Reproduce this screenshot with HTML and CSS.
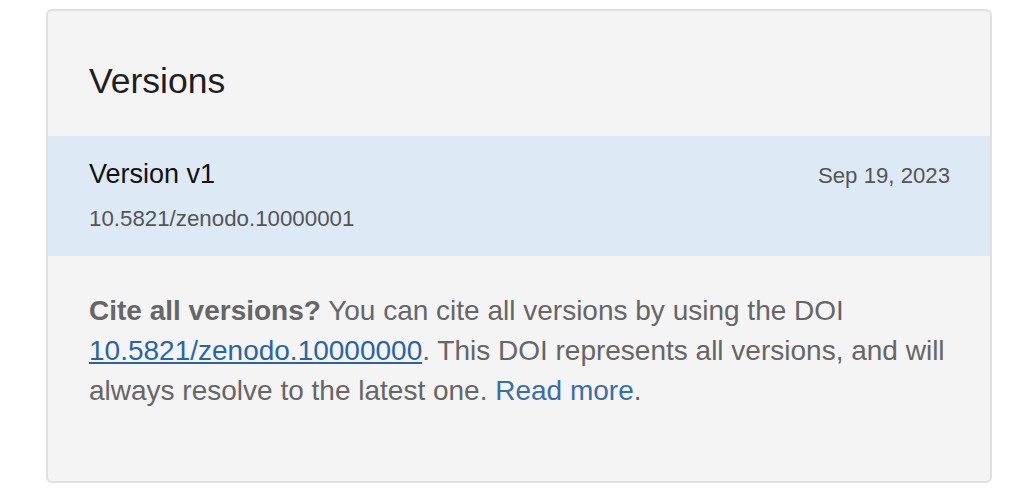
FILE: index.html
```html
<!DOCTYPE html>
<html>
  <head>
    <meta charset="utf-8">
    <link rel="stylesheet" href="styles.css">
  </head>
  <body>
    <div class='versionsCard'>
      <div class='cardHeader'>
        <h2 class='cardTitle'>Versions</h2>
      </div>
      <div class='versionRow'>
        <div class='versionMain'>
          <div class='versionName'>Version v1</div>
          <div class='versionDoi'>10.5821/zenodo.10000001</div>
        </div>
        <div class='versionDate'>Sep 19, 2023</div>
      </div>
      <div class='cardFooter'>
        <p class='citeNote'>
          <b>Cite all versions?</b> You can cite all versions by using the DOI
          <a class='doiLink' href='#'>10.5821/zenodo.10000000</a>. This DOI represents all versions, and will
          always resolve to the latest one. <a class='moreLink' href='#'>Read more</a>.
        </p>
      </div>
    </div>
  </body>
</html>
```

FILE: styles.css
```css
body{
  margin: 0;
  padding: 9px 26px 0 46px;
  background-color: #fff;
  font-family: "Liberation Sans", Arial, sans-serif;
}
.versionsCard{
  background-color: #f4f4f4;
  border: 2px solid #e0e0e0;
  border-radius: 6px;
  height: 470px;
}
.cardHeader{
  padding: 50px 41px 35px 41px;
}
.cardTitle{
  margin: 0;
  font-size: 35.5px;
  line-height: 40px;
  font-weight: normal;
  color: #1e1e1e;
}
.versionRow{
  display: flex;
  justify-content: space-between;
  align-items: flex-start;
  background-color: #ddeaf6;
  padding: 23px 40px 24px 41px;
}
.versionName{
  font-size: 27px;
  line-height: 30px;
  color: #111;
}
.versionDoi{
  margin-top: 17px;
  font-size: 22.3px;
  line-height: 26px;
  color: #555;
}
.versionDate{
  font-size: 22.2px;
  line-height: 30px;
  padding-top: 2px;
  color: #555;
}
.cardFooter{
  padding: 35px 41px 0 41px;
}
.citeNote{
  margin: 0;
  font-size: 28px;
  line-height: 40px;
  color: #666;
}
.citeNote b{
  color: #666;
}
.doiLink{
  color: #2a64a5;
  text-decoration: underline;
}
.moreLink{
  color: #3a6ea8;
  text-decoration: none;
}
```
